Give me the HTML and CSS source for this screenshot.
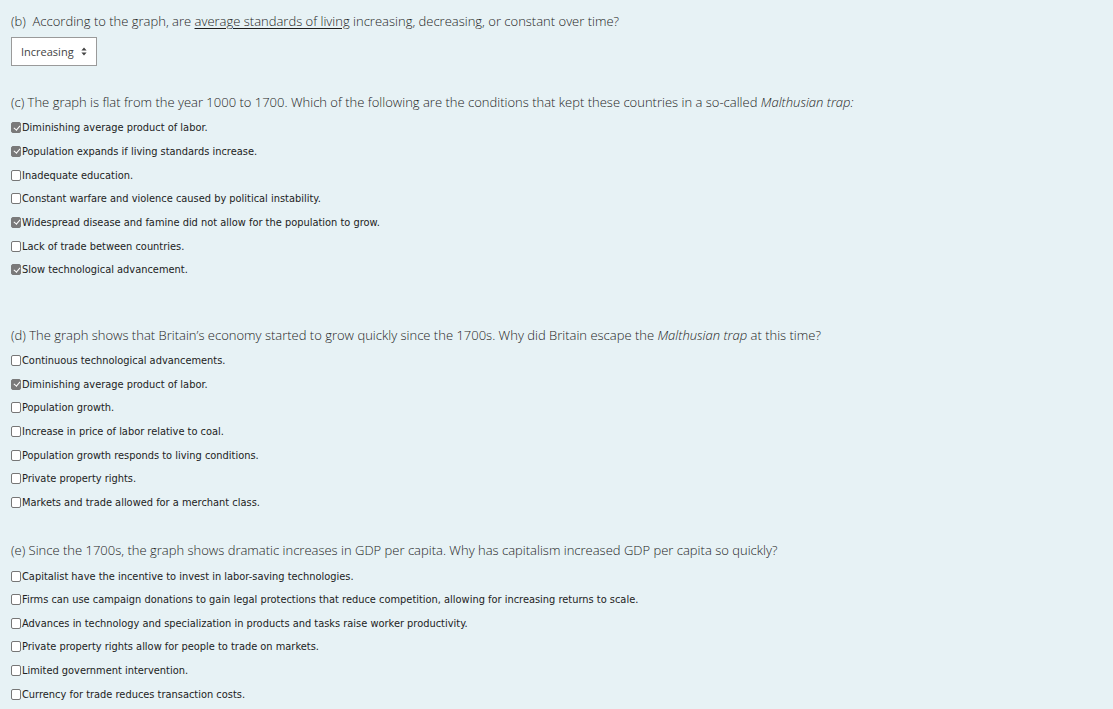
FILE: index.html
```html
<!DOCTYPE html>
<html>
<head>
<meta charset="utf-8">
<link rel="stylesheet" href="styles.css">
</head>
<body>
<div class="page">
  <section class="part part-b">
    <p class="q">(b)&nbsp; According to the graph, are <u>average standards of living</u> increasing, decreasing, or constant over time?</p>
    <div class="select"><span class="select-text">Increasing</span><svg class="select-arrow" width="6" height="9" viewBox="0 0 6 9"><path d="M3 0.5 L5.6 3.6 H0.4 Z M3 8.5 L5.6 5.4 H0.4 Z" fill="#444"/></svg></div>
  </section>

  <section class="part part-c">
    <p class="q">(c) The graph is flat from the year 1000 to 1700. Which of the following are the conditions that kept these countries in a so-called <i>Malthusian trap:</i></p>
    <ul class="opts">
      <li class="opt"><span class="cb on"></span>Diminishing average product of labor.</li>
      <li class="opt"><span class="cb on"></span>Population expands if living standards increase.</li>
      <li class="opt"><span class="cb"></span>Inadequate education.</li>
      <li class="opt"><span class="cb"></span>Constant warfare and violence caused by political instability.</li>
      <li class="opt"><span class="cb on"></span>Widespread disease and famine did not allow for the population to grow.</li>
      <li class="opt"><span class="cb"></span>Lack of trade between countries.</li>
      <li class="opt"><span class="cb on"></span>Slow technological advancement.</li>
    </ul>
  </section>

  <section class="part part-d">
    <p class="q">(d) The graph shows that Britain’s economy started to grow quickly since the 1700s. Why did Britain escape the <i>Malthusian trap</i> at this time?</p>
    <ul class="opts">
      <li class="opt"><span class="cb"></span>Continuous technological advancements.</li>
      <li class="opt"><span class="cb on"></span>Diminishing average product of labor.</li>
      <li class="opt"><span class="cb"></span>Population growth.</li>
      <li class="opt"><span class="cb"></span>Increase in price of labor relative to coal.</li>
      <li class="opt"><span class="cb"></span>Population growth responds to living conditions.</li>
      <li class="opt"><span class="cb"></span>Private property rights.</li>
      <li class="opt"><span class="cb"></span>Markets and trade allowed for a merchant class.</li>
    </ul>
  </section>

  <section class="part part-e">
    <p class="q">(e) Since the 1700s, the graph shows dramatic increases in GDP per capita. Why has capitalism increased GDP per capita so quickly?</p>
    <ul class="opts">
      <li class="opt"><span class="cb"></span>Capitalist have the incentive to invest in labor-saving technologies.</li>
      <li class="opt"><span class="cb"></span>Firms can use campaign donations to gain legal protections that reduce competition, allowing for increasing returns to scale.</li>
      <li class="opt"><span class="cb"></span>Advances in technology and specialization in products and tasks raise worker productivity.</li>
      <li class="opt"><span class="cb"></span>Private property rights allow for people to trade on markets.</li>
      <li class="opt"><span class="cb"></span>Limited government intervention.</li>
      <li class="opt"><span class="cb"></span>Currency for trade reduces transaction costs.</li>
    </ul>
  </section>
</div>
</body>
</html>
```

FILE: styles.css
```css
html, body {
  margin: 0;
  padding: 0;
  background: #e7f2f5;
}
.page {
  padding: 11px 11px 0 11px;
  color: #333;
}
.q {
  margin: 0;
  font-family: "Open Sans", "Noto Sans", sans-serif;
  font-size: 13px;
  font-weight: 300;
  line-height: 20px;
  color: #1e1e1e;
  white-space: nowrap;
}
.q u {
  text-decoration: underline;
  text-underline-offset: 2px;
}
.select {
  margin-top: 6px;
  width: 86px;
  height: 29px;
  box-sizing: border-box;
  border: 1px solid #9a9a9a;
  background: #fff;
  display: flex;
  align-items: center;
  justify-content: space-between;
  padding: 0 9px 0 9px;
  font-family: "Open Sans", sans-serif;
  font-size: 11px;
  color: #444;
}
.part-c { margin-top: 26px; }
.part-d { margin-top: 43px; }
.part-e { margin-top: 26px; }
.opts {
  list-style: none;
  margin: 4px 0 0 0;
  padding: 0;
}
.opt {
  display: flex;
  align-items: center;
  height: 23.67px;
  font-family: "DejaVu Sans", Verdana, sans-serif;
  font-size: 9.85px;
  color: #222;
  white-space: nowrap;
}
.cb {
  flex: none;
  width: 8px;
  height: 9px;
  border: 1px solid #767676;
  border-radius: 2px;
  background: #fff;
  margin-right: 1px;
  position: relative;
}
.cb.on {
  background: #7a7a7a;
  border-color: #7a7a7a;
}
.cb.on::after {
  content: "";
  position: absolute;
  left: 2.5px;
  top: 0.5px;
  width: 2.5px;
  height: 5px;
  border: solid #fff;
  border-width: 0 1.5px 1.5px 0;
  transform: rotate(40deg);
}
```
